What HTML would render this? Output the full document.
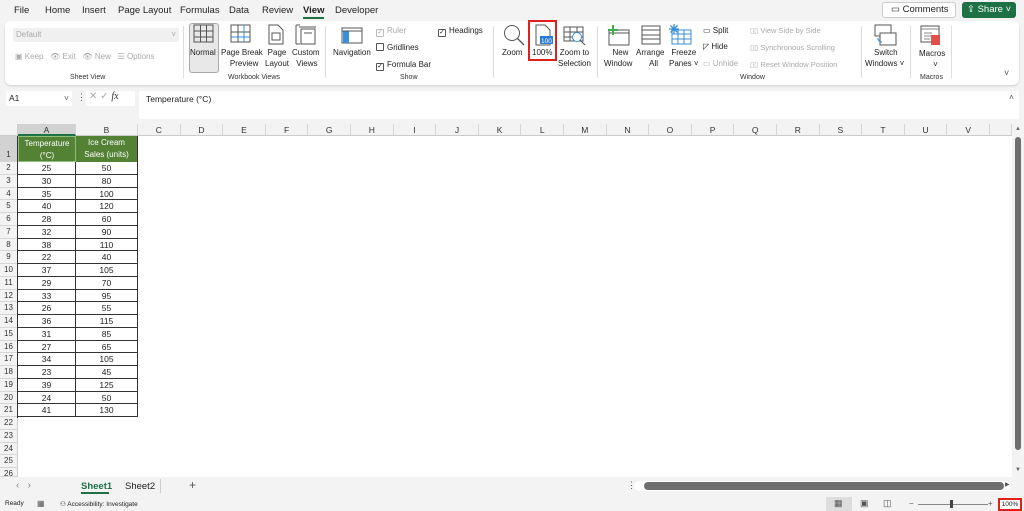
<!DOCTYPE html>
<html><head><meta charset="utf-8"><style>
*{box-sizing:border-box;margin:0;padding:0}
body{width:1024px;height:511px;overflow:hidden;background:#f3f3f3;font-family:"Liberation Sans",sans-serif;font-size:9px;color:#222;position:relative}
.a{position:absolute;white-space:nowrap}
.tab{top:5px;font-size:9.5px;color:#222}
.rib{left:5px;top:21px;width:1014px;height:64px;background:#fff;border-radius:6px;box-shadow:0 1px 2px rgba(0,0,0,.15)}
.lbl{font-size:7px;color:#333;text-align:center}
.bt{font-size:8px;color:#222;text-align:center;line-height:11px}
.g{color:#aaa}
.sep{width:1px;background:#ddd;top:26px;height:52px}
.cb{display:inline-block;width:8px;height:8px;border:1px solid #555;border-radius:1px;vertical-align:-1px;margin-right:3px;font-size:7px;line-height:6px;text-align:center}
.ch{top:124px;height:12px;background:#f3f3f3;border-right:1px solid #d6d6d6;border-bottom:1px solid #ccc;text-align:center;font-size:8.5px;line-height:12px;color:#333}
.rh{left:0;width:18px;background:#f3f3f3;border-bottom:1px solid #d6d6d6;border-right:1px solid #ccc;font-size:8px;color:#333;text-align:center}
.c{border-right:1px solid #333;border-bottom:1px solid #333;text-align:center;font-size:8.5px}
</style></head><body>
<div class="a tab" style="left:14px">File</div>
<div class="a tab" style="left:45px">Home</div>
<div class="a tab" style="left:82px">Insert</div>
<div class="a tab" style="left:118px">Page Layout</div>
<div class="a tab" style="left:180px">Formulas</div>
<div class="a tab" style="left:229px">Data</div>
<div class="a tab" style="left:262px">Review</div>
<div class="a tab" style="left:303px;font-weight:bold">View</div>
<div class="a" style="left:303px;top:17px;width:21px;height:2px;background:#1e7145"></div>
<div class="a tab" style="left:335px">Developer</div>
<div class="a" style="left:882px;top:2px;width:74px;height:16px;background:#fff;border:1px solid #ccc;border-radius:3px;font-size:9.5px;line-height:14px;padding-left:8px">▭ Comments</div>
<div class="a" style="left:962px;top:2px;width:54px;height:16px;background:#1e7145;border-radius:3px;color:#fff;font-size:9.5px;line-height:15px;padding-left:5px">⇪ Share ˅</div>

<div class="a rib"></div>
<div class="a" style="left:13px;top:28px;width:166px;height:14px;background:#f0f0f0;border-radius:2px;font-size:8px;color:#aaa;padding:2px 3px">Default<span style="float:right">˅</span></div>
<div class="a g" style="left:15px;top:52px;font-size:8px">▣ Keep &nbsp;&nbsp;👁 Exit &nbsp;&nbsp;👁 New &nbsp;&nbsp;☰ Options</div>
<div class="a lbl" style="left:70px;top:74px">Sheet View</div>
<div class="a sep" style="left:183px"></div>
<div class="a" style="left:189px;top:23px;width:30px;height:50px;background:#e8e8e8;border:1px solid #aaa;border-radius:3px"></div>
<svg class="a" style="left:193px;top:24px" width="22" height="20"><g fill="none" stroke="#555"><rect x="1" y="1" width="19" height="17"/><path d="M7.5 1v17M13.5 1v17M1 7h19M1 13h19"/></g></svg>
<div class="a bt" style="left:190px;top:47px">Normal</div>
<svg class="a" style="left:230px;top:24px" width="22" height="20"><g fill="none" stroke="#555"><rect x="1" y="1" width="19" height="17"/><path d="M8 1v17M1 8h19"/></g><path d="M14 1v17M1 13h19" stroke="#3a8fd9"/></svg>
<div class="a bt" style="left:221px;top:47px">Page Break<br>&nbsp;&nbsp;Preview</div>
<svg class="a" style="left:268px;top:24px" width="16" height="21"><path d="M1 1h9l5 5v14H1z" fill="none" stroke="#555"/><rect x="4" y="9" width="8" height="7" fill="none" stroke="#555"/></svg>
<div class="a bt" style="left:265px;top:47px">Page<br>Layout</div>
<svg class="a" style="left:295px;top:24px" width="22" height="21"><g fill="none" stroke="#555"><path d="M1 1v19M1 1h4M1 20h4M4 3h17"/><rect x="6" y="5" width="14" height="15"/><path d="M9 9h8"/></g></svg>
<div class="a bt" style="left:292px;top:47px">Custom<br>&nbsp;Views</div>
<div class="a lbl" style="left:228px;top:74px">Workbook Views</div>
<div class="a sep" style="left:325px"></div>
<svg class="a" style="left:341px;top:27px" width="22" height="18"><rect x="1" y="1" width="20" height="15" fill="none" stroke="#555"/><rect x="2" y="4" width="6" height="12" fill="#3a8fd9"/><path d="M1 4h20" stroke="#555"/></svg>
<div class="a bt" style="left:333px;top:47px">Navigation</div>
<div class="a g" style="left:376px;top:26px;font-size:8px"><span class="cb" style="border-color:#bbb">✓</span>Ruler</div>
<div class="a" style="left:376px;top:43px;font-size:8px"><span class="cb"></span>Gridlines</div>
<div class="a" style="left:376px;top:60px;font-size:8px"><span class="cb">✓</span>Formula Bar</div>
<div class="a" style="left:438px;top:26px;font-size:8px"><span class="cb">✓</span>Headings</div>
<div class="a lbl" style="left:400px;top:74px">Show</div>
<div class="a sep" style="left:493px"></div>
<svg class="a" style="left:503px;top:24px" width="22" height="22"><circle cx="9" cy="9" r="7.5" fill="none" stroke="#555"/><path d="M14 14l7 7" stroke="#555" stroke-width="1.3"/></svg>
<div class="a bt" style="left:502px;top:47px">Zoom</div>
<svg class="a" style="left:534px;top:24px" width="20" height="22"><path d="M2 1h9l5 5v15H2z" fill="none" stroke="#555"/><rect x="6" y="12" width="13" height="8" fill="#2b7cd3"/><text x="7" y="19" font-size="6.5" fill="#fff" font-family="Liberation Sans">100</text></svg>
<div class="a bt" style="left:532px;top:47px">100%</div>
<div class="a" style="left:528px;top:20px;width:29px;height:41px;border:2px solid #e0201b"></div>
<svg class="a" style="left:563px;top:26px" width="24" height="20"><g fill="none" stroke="#555"><rect x="1" y="1" width="19" height="14"/><path d="M7 1v14M14 1v14M1 6h19M1 11h19"/></g><circle cx="14" cy="11" r="4.5" fill="#fff" stroke="#3a8fd9"/><path d="M17 14l5 5" stroke="#555"/></svg>
<div class="a bt" style="left:558px;top:47px">Zoom to<br>Selection</div>
<div class="a sep" style="left:597px"></div>
<svg class="a" style="left:606px;top:24px" width="24" height="22"><rect x="3" y="6" width="20" height="15" fill="none" stroke="#555"/><path d="M3 9h20" stroke="#555"/><path d="M7 1v10M2 6h10" stroke="#3cae4e" stroke-width="2"/></svg>
<div class="a bt" style="left:604px;top:47px">&nbsp;&nbsp;New<br>Window</div>
<svg class="a" style="left:641px;top:25px" width="20" height="20"><g fill="none" stroke="#555"><rect x="1" y="1" width="18" height="18"/><path d="M1 5h18M1 10h18M1 14h18"/></g></svg>
<div class="a bt" style="left:636px;top:47px">Arrange<br>&nbsp;&nbsp;&nbsp;All</div>
<svg class="a" style="left:668px;top:23px" width="24" height="22"><rect x="4" y="7" width="19" height="14" fill="none" stroke="#3a8fd9"/><path d="M4 11h19M10 7v14M16 7v14M4 16h19" stroke="#3a8fd9"/><path d="M6 1v10M1 6h10M2.5 2.5l7 7M9.5 2.5l-7 7" stroke="#3a8fd9" stroke-width="1.3"/></svg>
<div class="a bt" style="left:669px;top:47px">Freeze<br>Panes ˅</div>
<div class="a" style="left:703px;top:26px;font-size:8px">▭ Split</div>
<div class="a" style="left:703px;top:42px;font-size:8px">◸ Hide</div>
<div class="a g" style="left:703px;top:59px;font-size:8px">▭ Unhide</div>
<div class="a g" style="left:750px;top:26px;font-size:7.5px">▯▯ View Side by Side</div>
<div class="a g" style="left:750px;top:43px;font-size:7.5px">▯▯ Synchronous Scrolling</div>
<div class="a g" style="left:750px;top:60px;font-size:7.5px">▯▯ Reset Window Position</div>
<div class="a lbl" style="left:740px;top:74px">Window</div>
<div class="a sep" style="left:861px"></div>
<svg class="a" style="left:873px;top:24px" width="24" height="22"><g fill="none" stroke="#555"><rect x="2" y="1" width="16" height="11"/><rect x="7" y="9" width="16" height="12" fill="#fff"/></g><path d="M5 14a4 4 0 0 0 4 4" stroke="#3a8fd9" fill="none" stroke-width="1.3"/></svg>
<div class="a bt" style="left:865px;top:47px">&nbsp;Switch<br>Windows ˅</div>
<div class="a sep" style="left:910px"></div>
<svg class="a" style="left:920px;top:25px" width="22" height="22"><rect x="1" y="1" width="18" height="16" fill="none" stroke="#555"/><path d="M1 4h18M4 8h8M4 11h8M4 14h6" stroke="#888"/><rect x="11" y="10" width="9" height="10" fill="#e0504a"/></svg>
<div class="a bt" style="left:919px;top:48px">Macros<br>&nbsp;&nbsp;&nbsp;˅</div>
<div class="a lbl" style="left:920px;top:74px">Macros</div>
<div class="a sep" style="left:951px"></div>
<div class="a" style="left:1004px;top:68px;font-size:9px;color:#555">˅</div>

<div class="a" style="left:6px;top:91px;width:66px;height:15px;background:#fff;border-radius:2px;font-size:8.5px;padding:2px 3px">A1<span style="float:right;color:#555">˅</span></div>
<div class="a" style="left:77px;top:92px;font-size:9px;color:#555">⋮</div>
<div class="a" style="left:86px;top:91px;width:49px;height:15px;background:#fff;border-radius:2px;font-size:10px;color:#aaa;padding:0 3px">✕ ✓ <i style="color:#333;font-family:'Liberation Serif'">fx</i></div>
<div class="a" style="left:139px;top:91px;width:880px;height:28px;background:#fff;border-radius:2px;font-size:8.5px;padding:3px 7px">Temperature (°C)<span style="position:absolute;right:5px;top:1px;color:#555">˄</span></div>

<div class="a" style="left:0;top:124px;width:1012px;height:353px;background:#fff"></div>
<div class="a" style="left:0;top:124px;width:18px;height:12px;background:#f3f3f3;border-right:1px solid #ccc;border-bottom:1px solid #ccc"></div>
<div class="a ch" style="left:18px;width:58px;background:#d2d2d2;border-bottom:2px solid #1e7145">A</div>
<div class="a ch" style="left:76px;width:62px">B</div>
<div id="cols"></div>
<div class="a" style="left:18px;top:136px;width:120px;height:26px;background:#548235"></div>
<div class="a" style="left:18px;top:136px;width:58px;height:26px;border:1px solid #8fbf7a;color:#fff;text-align:center;font-size:8px;line-height:12px;padding-top:1px">Temperature<br>(°C)</div>
<div class="a" style="left:76px;top:136px;width:62px;height:26px;color:#fff;text-align:center;font-size:8px;line-height:12px;padding-top:1px;border-right:1px solid #333">Ice Cream<br>Sales (units)</div>
<div class="a rh" style="top:136px;height:26px;padding-top:14px;background:#d2d2d2">1</div>
<div id="rows"></div>

<div class="a" style="left:1012px;top:124px;width:12px;height:353px;background:#f3f3f3"></div>
<div class="a" style="left:1015px;top:137px;width:6px;height:313px;background:#6f6f6f;border-radius:3px"></div>
<div class="a" style="left:1015px;top:126px;font-size:6px;color:#666">▲</div>
<div class="a" style="left:1015px;top:467px;font-size:6px;color:#666">▼</div>

<div class="a" style="left:0;top:477px;width:1024px;height:20px;background:#f3f3f3"></div>
<div class="a" style="left:16px;top:480px;font-size:10px;color:#888">‹ &nbsp;&nbsp;›</div>
<div class="a" style="left:81px;top:481px;font-size:9.5px;font-weight:bold;color:#1e7145">Sheet1</div>
<div class="a" style="left:81px;top:492px;width:28px;height:2px;background:#1e7145"></div>
<div class="a" style="left:125px;top:481px;font-size:9.5px">Sheet2</div>
<div class="a" style="left:160px;top:479px;width:1px;height:14px;background:#ccc"></div>
<div class="a" style="left:189px;top:478px;font-size:12px;color:#555">+</div>
<div class="a" style="left:627px;top:480px;font-size:9px;color:#555">⋮</div>
<div class="a" style="left:634px;top:481px;width:376px;height:10px;background:#fff;border-radius:5px"></div>
<div class="a" style="left:644px;top:482px;width:360px;height:8px;background:#6f6f6f;border-radius:4px"></div>
<div class="a" style="left:1005px;top:481px;font-size:6px;color:#555">▶</div>

<div class="a" style="left:0;top:497px;width:1024px;height:14px;background:#f3f3f3"></div>
<div class="a" style="left:5px;top:500px;font-size:6.5px">Ready</div>
<div class="a" style="left:37px;top:499px;font-size:8px;color:#555">▦</div>
<div class="a" style="left:60px;top:500px;font-size:6.5px">⚇ Accessibility: Investigate</div>
<div class="a" style="left:826px;top:497px;width:26px;height:14px;background:#ddd"></div>
<div class="a" style="left:834px;top:498px;font-size:9px;color:#555">▦</div>
<div class="a" style="left:860px;top:498px;font-size:9px;color:#555">▣</div>
<div class="a" style="left:883px;top:498px;font-size:9px;color:#555">◫</div>
<div class="a" style="left:909px;top:499px;font-size:8px;color:#555">−</div>
<div class="a" style="left:918px;top:504px;width:70px;height:1px;background:#888"></div>
<div class="a" style="left:950px;top:500px;width:3px;height:8px;background:#444"></div>
<div class="a" style="left:988px;top:499px;font-size:8px;color:#555">+</div>
<div class="a" style="left:998px;top:498px;width:24px;height:13px;border:2px solid #e0201b;font-size:6.5px;line-height:9px;text-align:center;background:#fff">100%</div>

<script>
var cols="CDEFGHIJKLMNOPQRSTUV",h="";
for(var i=0;i<cols.length;i++){var l=138+i*42.6;h+='<div class="a ch" style="left:'+l+'px;width:42.6px">'+cols[i]+'</div>';}
h+='<div class="a ch" style="left:990px;width:22px"></div>';
document.getElementById('cols').innerHTML=h;
var d=[[25,50],[30,80],[35,100],[40,120],[28,60],[32,90],[38,110],[22,40],[37,105],[29,70],[33,95],[26,55],[36,115],[31,85],[27,65],[34,105],[23,45],[39,125],[24,50],[41,130]];
var r="";
for(var k=0;k<25;k++){var t=162+k*12.75,hh=12.75;if(t+hh>477)hh=477-t;
r+='<div class="a rh" style="top:'+t+'px;height:'+hh+'px;line-height:12px">'+(k+2)+'</div>';
if(k<20){r+='<div class="a c" style="left:18px;top:'+t+'px;width:58px;height:12.75px;line-height:12px">'+d[k][0]+'</div><div class="a c" style="left:76px;top:'+t+'px;width:62px;height:12.75px;line-height:12px">'+d[k][1]+'</div>';}}
r+='<div class="a" style="left:17px;top:136px;width:1px;height:282px;background:#333"></div>';
document.getElementById('rows').innerHTML=r;
</script>
</body></html>
